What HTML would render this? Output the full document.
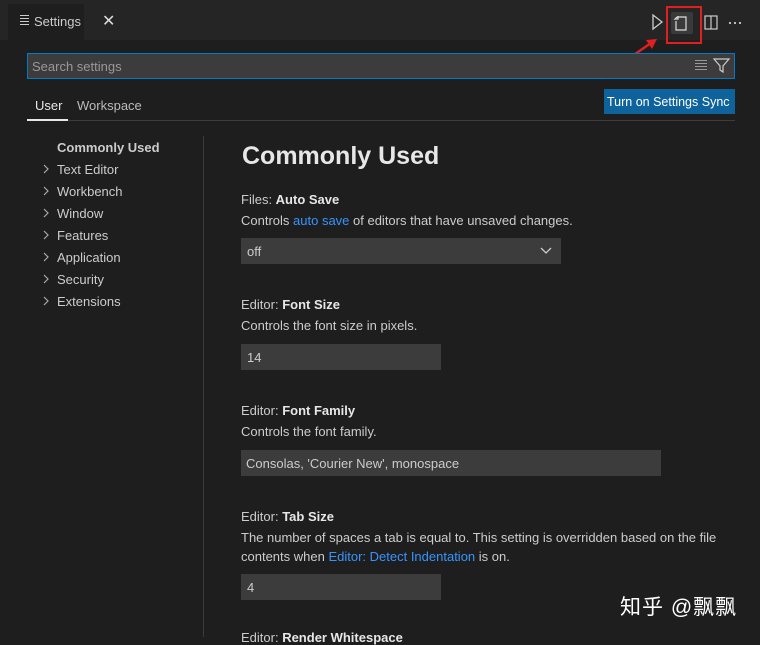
<!DOCTYPE html>
<html><head><meta charset="utf-8"><style>
*{margin:0;padding:0;box-sizing:border-box}
body{width:760px;height:637px;overflow:hidden;background:#1e1e1e;font-family:"Liberation Sans","Noto Sans CJK SC",sans-serif;color:#ccc;position:relative;font-size:13px}
.a{position:absolute;white-space:nowrap}
.title{left:0;top:0;width:760px;height:40px;background:#252526}
.tab{left:8px;top:4px;width:76px;height:36px;background:#1e1e1e}
.lbl{font-size:13px;color:#ccc}
.b{font-weight:bold;color:#e7e7e7}
.d{color:#ccc;font-size:13px}
.inp{background:#3c3c3c;height:26px;color:#ccc;padding:6px 0 0 6px;font-size:13px}
a{color:#3794ff;text-decoration:none}
.nav{left:57px;font-size:13px;color:#ccc}
.chev{left:42px}
</style></head><body>
<div class="a title"></div>
<div class="a tab"></div>
<div class="a" style="left:20px;top:15px;width:9px;height:1px;background:#ccc;box-shadow:0 3px #ccc,0 6px #ccc,0 9px #ccc"></div>
<div class="a lbl" style="left:34px;top:14px">Settings</div>
<div class="a" style="left:102px;top:11px;font-size:16px;color:#ddd">✕</div>
<svg class="a" style="left:648px;top:12px" width="100" height="22" viewBox="0 0 100 22">
<path d="M5 3 L14 10 L5 17 Z" fill="none" stroke="#ccc" stroke-width="1.3"/>
<rect x="23" y="0" width="22" height="22" rx="2" fill="#3a3a3a"/>
<path d="M29 5 h9 v13 h-10 v-9 M29 5 l-2 2 h3 v-3" fill="none" stroke="#ddd" stroke-width="1.2"/>
<rect x="57" y="4" width="12" height="13" fill="none" stroke="#ccc" stroke-width="1.2"/><line x1="63" y1="4" x2="63" y2="17" stroke="#ccc" stroke-width="1.2"/>
<circle cx="82" cy="11" r="1.1" fill="#ccc"/><circle cx="87" cy="11" r="1.1" fill="#ccc"/><circle cx="92" cy="11" r="1.1" fill="#ccc"/>
</svg>
<div class="a" style="left:666px;top:6px;width:36px;height:38px;border:2px solid #e02020"></div>
<svg class="a" style="left:625px;top:38px" width="36" height="24"><path d="M3 21 L26 5" stroke="#e02020" stroke-width="2.5"/><path d="M21 2 L32 1 L27 11 Z" fill="#e02020"/></svg>
<div class="a" style="left:27px;top:53px;width:708px;height:26px;background:#3c3c3c;border:1px solid #007acc"></div>
<div class="a" style="left:32px;top:59px;color:#999">Search settings</div>
<div class="a" style="left:695px;top:60px;width:12px;height:1px;background:#999;box-shadow:0 3px #999,0 6px #999,0 9px #999"></div>
<svg class="a" style="left:713px;top:58px" width="18" height="16"><path d="M1 1 H16 L10 8 V14 L7 12 V8 Z" fill="none" stroke="#ccc" stroke-width="1.2"/></svg>
<div class="a" style="left:35px;top:98px;color:#e7e7e7">User</div>
<div class="a" style="left:77px;top:98px;color:#bbb">Workspace</div>
<div class="a" style="left:27px;top:120px;width:708px;height:1px;background:#3c3c3c"></div>
<div class="a" style="left:27px;top:119px;width:41px;height:2px;background:#e7e7e7"></div>
<div class="a" style="left:604px;top:89px;width:131px;height:25px;background:#0e639c;color:#fff;padding:6px 0 0 3px;font-size:12.5px">Turn on Settings Sync</div>
<div class="a nav b" style="top:140px">Commonly Used</div>
<svg class="a chev" style="top:164px" width="8" height="110"><g fill="none" stroke="#aaa" stroke-width="1.2"><path d="M2 1 L6 5 L2 9"/><path d="M2 23 L6 27 L2 31"/><path d="M2 45 L6 49 L2 53"/><path d="M2 67 L6 71 L2 75"/><path d="M2 89 L6 93 L2 97"/></g></svg>
<svg class="a chev" style="top:274px" width="8" height="40"><g fill="none" stroke="#aaa" stroke-width="1.2"><path d="M2 1 L6 5 L2 9"/><path d="M2 23 L6 27 L2 31"/></g></svg>
<div class="a nav" style="top:162px">Text Editor</div>
<div class="a nav" style="top:184px">Workbench</div>
<div class="a nav" style="top:206px">Window</div>
<div class="a nav" style="top:228px">Features</div>
<div class="a nav" style="top:250px">Application</div>
<div class="a nav" style="top:272px">Security</div>
<div class="a nav" style="top:294px">Extensions</div>
<div class="a" style="left:203px;top:136px;width:1px;height:501px;background:#3c3c3c"></div>
<div class="a b" style="left:242px;top:142px;font-size:25px">Commonly Used</div>
<div class="a d" style="left:241px;top:192px">Files: <span class="b">Auto Save</span></div>
<div class="a d" style="left:241px;top:213px">Controls <a>auto save</a> of editors that have unsaved changes.</div>
<div class="a inp" style="left:241px;top:238px;width:320px">off</div>
<svg class="a" style="left:540px;top:246px" width="12" height="10"><path d="M1 2 L6 7 L11 2" fill="none" stroke="#ccc" stroke-width="1.3"/></svg>
<div class="a d" style="left:241px;top:297px">Editor: <span class="b">Font Size</span></div>
<div class="a d" style="left:241px;top:318px">Controls the font size in pixels.</div>
<div class="a inp" style="left:241px;top:344px;width:200px">14</div>
<div class="a d" style="left:241px;top:403px">Editor: <span class="b">Font Family</span></div>
<div class="a d" style="left:241px;top:424px">Controls the font family.</div>
<div class="a inp" style="left:241px;top:450px;width:420px;padding-left:5px">Consolas, 'Courier New', monospace</div>
<div class="a d" style="left:241px;top:509px">Editor: <span class="b">Tab Size</span></div>
<div class="a d" style="left:241px;top:530px">The number of spaces a tab is equal to. This setting is overridden based on the file</div>
<div class="a d" style="left:241px;top:549px">contents when <a>Editor: Detect Indentation</a> is on.</div>
<div class="a inp" style="left:241px;top:574px;width:200px">4</div>
<div class="a d" style="left:241px;top:630px">Editor: <span class="b">Render Whitespace</span></div>
<div class="a" style="left:620px;top:591px;font-size:21px;color:#fff;letter-spacing:1px">知乎 @飘飘</div>
</body></html>
